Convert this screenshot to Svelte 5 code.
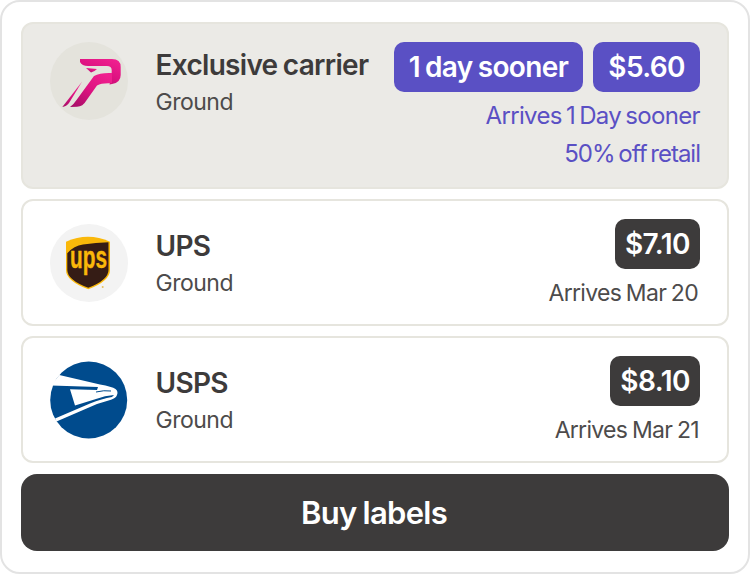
<script>
  const rows = [
    { name: 'UPS', logo: 'ups', price: '$7.10', note: 'Arrives Mar 20', notePad: true },
    { name: 'USPS', logo: 'usps', price: '$8.10', note: 'Arrives Mar 21', notePad: false }
  ];
</script>

<div class="frame">
  <section class="row featured">
    <span class="logo pink">
      <svg viewBox="0 0 78 78" width="78" height="78">
        <defs>
          <linearGradient id="pg" x1="0.1" y1="1" x2="0.8" y2="0">
            <stop offset="0" stop-color="#a80e68" />
            <stop offset="0.5" stop-color="#dc1280" />
            <stop offset="1" stop-color="#f0208f" />
          </linearGradient>
        </defs>
        <g fill="url(#pg)">
          <path d="M30 17 H62 Q70.700 17 70.700 25 V33 Q70.700 40.500 62 42 L59.500 42.500 Q62 34 61.700 28 Q61.500 24 57 24 H38 Q32 24 30 20 Z" />
          <path d="M36 26 L47 27 Q44 30 41 30.500 Z" />
          <path d="M44 34 Q50 30.500 62 31 V41.300 Q52 40.500 47 43.500 L36 59 Q33 64.500 27 64.800 L20 65 Q24 62 26.500 58 Z" />
          <path d="M32 39.700 L12.300 65 Q16.500 64.500 19 61 L27 48 Z" />
        </g>
      </svg>
    </span>
    <div class="main">
      <h2>Exclusive carrier</h2>
      <p>Ground</p>
    </div>
    <div class="side">
      <div class="badges">
        <span class="badge violet">1 day sooner</span>
        <span class="badge violet">$5.60</span>
      </div>
      <p class="violet-text first">Arrives 1 Day sooner</p>
      <p class="violet-text second">50% off retail</p>
    </div>
  </section>

  {#each rows as r}
    <section class="row plain">
      {#if r.logo === 'ups'}
        <span class="logo pale">
          <svg viewBox="0 0 78 78" width="78" height="78">
            <path fill="#fab80a" d="M16 17.700 Q38 8 60 17.700 V46 Q60 57 38.300 65.300 Q16 57 16 46 Z" />
            <path fill="#351c15" d="M17.300 29.300 Q24 21.500 33 20.500 Q46 18.500 58.500 18.300 V46 Q58.500 56 38.300 63.800 Q17.300 56 17.300 46 Z" />
            <text x="38.500" y="44" textLength="37" lengthAdjust="spacingAndGlyphs" class="upsword">ups</text>
            <circle cx="52.700" cy="63" r="1" fill="#e8c060" />
          </svg>
        </span>
      {:else}
        <span class="logo">
          <svg viewBox="0 0 78 78" width="78" height="78">
            <circle cx="38.700" cy="39" r="38.500" fill="#004b8d" />
            <path fill="#fff" d="M9.300 14 L50 23.500 Q62 25.500 65.500 28 Q68.500 30.500 67 34 Q66 37 61 38.800 L47 43 L6.500 60.500 L5 57.500 L40 42.500 Q52 37.500 62 36 L64 34 Q55 34.500 46 38 L25 44.500 L20 28.300 L47 29 L48 26 L1 24.500 Z" />
            <path fill="none" stroke="#004b8d" stroke-width="1" d="M46 31 Q54 29 61 30" />
          </svg>
        </span>
      {/if}
      <div class="main">
        <h2>{r.name}</h2>
        <p>Ground</p>
      </div>
      <div class="side">
        <span class="badge dark">{r.price}</span>
        <p class="note" class:inset={r.notePad}>{r.note}</p>
      </div>
    </section>
  {/each}

  <button class="buy">Buy labels</button>
</div>

<style>
  :global(body) {
    margin: 0;
    background: #fff;
  }
  .frame {
    box-sizing: border-box;
    width: 750px;
    height: 574px;
    border: 2px solid #e3e3e3;
    border-radius: 20px;
    padding: 20px 19px 21px;
    display: flex;
    flex-direction: column;
    gap: 10px;
    font-family: Inter, sans-serif;
    color: #3d3b3b;
  }
  .row {
    box-sizing: border-box;
    height: 127px;
    border: 2px solid #e6e5de;
    border-radius: 12px;
    padding: 18px 27px 0;
    display: flex;
    align-items: flex-start;
    background: #fff;
  }
  .featured {
    height: 167px;
    background: #ebeae6;
  }
  .logo {
    flex: none;
    width: 78px;
    height: 78px;
    border-radius: 50%;
    display: block;
  }
  .plain .logo {
    margin-top: 5px;
  }
  .plain h2 {
    margin-top: 7px;
  }
  .logo svg {
    display: block;
  }
  .pink {
    background: #e4e3dc;
  }
  .pale {
    background: #f3f3f3;
  }
  .upsword {
    font-family: "Liberation Sans", sans-serif;
    font-weight: 700;
    font-size: 32px;
    fill: #fab80a;
    stroke: #fab80a;
    stroke-width: 0.4px;
    text-anchor: middle;
  }
  .main {
    margin-left: 27.5px;
    flex: 1;
  }
  h2 {
    margin: 3px 0 0;
    font-size: 28px;
    line-height: 40px;
    font-weight: 600;
    letter-spacing: -0.7px;
    word-spacing: -1px;
  }
  p {
    margin: 0;
  }
  .main p {
    font-size: 23px;
    line-height: 34px;
    letter-spacing: -0.5px;
    color: #4d4b4b;
  }
  .side {
    display: flex;
    flex-direction: column;
    align-items: flex-end;
  }
  .badges {
    display: flex;
    gap: 10px;
  }
  .badge {
    display: block;
    height: 50px;
    line-height: 50px;
    padding: 0 15px;
    border-radius: 10px;
    font-size: 28px;
    font-weight: 600;
    letter-spacing: -0.6px;
    word-spacing: -1.500px;
    color: #fff;
  }
  .violet {
    background: #5a50c4;
  }
  .dark {
    background: #3d3b3b;
    padding: 0 10px;
    letter-spacing: -0.5px;
  }
  .violet-text {
    color: #5a50c4;
    font-size: 24px;
    line-height: 38px;
    word-spacing: -2px;
  }
  .first {
    margin-top: 5px;
    letter-spacing: -0.65px;
  }
  .second {
    letter-spacing: -1px;
  }
  .note {
    margin-top: 5px;
    margin-right: 1px;
    font-size: 23px;
    line-height: 38px;
    letter-spacing: -0.7px;
    word-spacing: -1px;
    color: #4d4b4b;
  }
  .inset {
    margin-right: 2px;
  }
  .buy {
    flex: none;
    height: 77px;
    margin-top: 1px;
    padding: 0 2px 0 0;
    border: 0;
    border-radius: 16px;
    background: #3d3b3b;
    color: #fff;
    font-family: Inter, sans-serif;
    font-size: 31px;
    font-weight: 600;
    letter-spacing: -0.7px;
    word-spacing: -1px;
  }
</style>
